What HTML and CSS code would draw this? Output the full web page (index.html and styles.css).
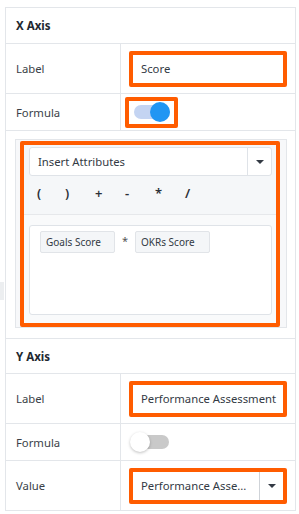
FILE: index.html
```html
<!DOCTYPE html>
<html lang="en">
  <head>
    <meta charset="UTF-8" />
    <meta name="viewport" content="width=device-width, initial-scale=1.0" />
    <title>Chart Axis Settings</title>
    <link rel="stylesheet" href="styles.css">
  </head>
  <body>
    <div class="edge-tab"></div>
    <div class="panel">
      <div class="section-title">X Axis</div>

      <div class="row row-tall">
        <div class="row-label">Label</div>
        <div class="row-value">
          <div class="hl hl-input">
            <input class="text-input" type="text" value="Score" />
          </div>
        </div>
      </div>

      <div class="row row-short">
        <div class="row-label">Formula</div>
        <div class="row-value">
          <div class="hl hl-toggle">
            <div class="toggle on"><span class="knob"></span></div>
          </div>
        </div>
      </div>

      <div class="formula-area">
        <div class="formula-box">
          <div class="hl hl-editor">
            <div class="editor-top">
              <div class="select">
                <span class="select-text">Insert Attributes</span>
                <span class="select-caret"><span class="caret"></span></span>
              </div>
              <div class="operators">
                <span class="op">(</span>
                <span class="op">)</span>
                <span class="op">+</span>
                <span class="op">-</span>
                <span class="op">*</span>
                <span class="op">/</span>
              </div>
            </div>
            <div class="editor-bottom">
              <div class="expression">
                <span class="chip">Goals Score</span>
                <span class="chip-op">*</span>
                <span class="chip">OKRs Score</span>
              </div>
            </div>
          </div>
        </div>
      </div>

      <div class="section-title with-border">Y Axis</div>

      <div class="row row-tall">
        <div class="row-label">Label</div>
        <div class="row-value">
          <div class="hl hl-input">
            <input class="text-input" type="text" value="Performance Assessment" />
          </div>
        </div>
      </div>

      <div class="row row-short">
        <div class="row-label">Formula</div>
        <div class="row-value">
          <div class="toggle off"><span class="knob"></span></div>
        </div>
      </div>

      <div class="row row-tall">
        <div class="row-label">Value</div>
        <div class="row-value">
          <div class="hl hl-input">
            <div class="select select-plain">
              <span class="select-text">Performance Asse...</span>
              <span class="select-caret"><span class="caret"></span></span>
            </div>
          </div>
        </div>
      </div>
    </div>
  </body>
</html>
```

FILE: styles.css
```css
* {
  margin: 0;
  padding: 0;
  box-sizing: border-box;
}

body {
  font-family: 'Noto Sans', 'Open Sans', Arial, sans-serif;
  font-size: 11.3px;
  color: #333a44;
  background: #ffffff;
  padding: 7px 3px 0 5px;
}

.edge-tab {
  position: absolute;
  left: 0;
  top: 282px;
  width: 4px;
  height: 18px;
  background: #eceef0;
}

.panel {
  width: 291px;
  border: 1px solid #e3e6ea;
}

.section-title {
  height: 35px;
  display: flex;
  align-items: center;
  padding-left: 10px;
  font-weight: bold;
  font-size: 11.5px;
  color: #222831;
}

.section-title.with-border {
  border-top: 1px solid #e3e6ea;
}

.row {
  display: grid;
  grid-template-columns: 115px 1fr;
  border-top: 1px solid #e3e6ea;
}

.row-tall {
  height: 50px;
}

.row-short {
  height: 37px;
}

.row-label {
  display: flex;
  align-items: center;
  padding-left: 10px;
  border-right: 1px solid #e3e6ea;
  color: #3a3f47;
}

.row-value {
  display: flex;
  align-items: center;
  padding-left: 8px;
}

.hl {
  border: 4px solid #ff5c00;
  border-radius: 2px;
}

.hl-input {
  width: 158px;
  height: 36px;
  display: flex;
}

.text-input {
  flex: 1;
  min-width: 0;
  border: none;
  outline: none;
  background: #fff;
  font-family: inherit;
  font-size: 11.3px;
  color: #333a44;
  padding-left: 8px;
}

.hl-toggle {
  width: 53px;
  height: 31px;
  margin-left: -4px;
  display: flex;
  align-items: center;
  padding-left: 5px;
}

.toggle {
  position: relative;
  width: 36px;
  height: 14px;
  border-radius: 7px;
}

.toggle .knob {
  position: absolute;
  top: -3px;
  width: 20px;
  height: 20px;
  border-radius: 50%;
}

.toggle.on {
  background: #c4d4f2;
}

.toggle.on .knob {
  right: 0;
  background: #2196f3;
}

.toggle.off {
  background: #c9c9c9;
  margin-left: 6px;
  width: 34px;
}

.toggle.off .knob {
  left: -5px;
  background: #ffffff;
  box-shadow: 0 1px 3px rgba(0, 0, 0, 0.25);
}

.formula-area {
  border-top: 1px solid #e3e6ea;
  padding: 8px 8px 10px 9px;
}

.formula-box {
  border: 1px solid #e3e6ea;
  background: #f7f8fa;
  padding: 1px 6px 0 4px;
}

.hl-editor {
  height: 186px;
  display: flex;
  flex-direction: column;
}

.editor-top {
  background: #f5f7f9;
  padding: 2px 4px 0 5px;
  height: 70px;
  border-bottom: 1px solid #e6e8eb;
}

.select {
  height: 29px;
  display: flex;
  background: #ffffff;
  border: 1px solid #dfe3e8;
  border-radius: 3px;
}

.select-text {
  flex: 1;
  display: flex;
  align-items: center;
  padding-left: 8px;
  color: #333a44;
  white-space: nowrap;
  overflow: hidden;
}

.select-caret {
  width: 24px;
  border-left: 1px solid #dfe3e8;
  display: flex;
  align-items: center;
  justify-content: center;
}

.caret {
  width: 0;
  height: 0;
  border-left: 4px solid transparent;
  border-right: 4px solid transparent;
  border-top: 4px solid #333a44;
}

.select-plain {
  flex: 1;
  border: none;
  border-radius: 0;
  height: auto;
}

.select-plain .select-caret {
  width: 24px;
  border-left-color: #cfd3d8;
}

.operators {
  display: flex;
  height: 34px;
  align-items: center;
  padding-left: 8px;
}

.op {
  width: 30px;
  font-size: 13px;
  font-weight: 600;
  color: #2c3038;
}

.op:first-child {
  width: 28px;
}

.editor-bottom {
  flex: 1;
  background: #f9fafb;
  padding: 10px 4px 4px 5px;
}

.expression {
  height: 90px;
  background: #ffffff;
  border: 1px solid #dfe3e8;
  border-radius: 3px;
  padding: 5px 10px;
  display: flex;
  align-items: flex-start;
}

.chip {
  height: 22px;
  width: 75px;
  display: flex;
  align-items: center;
  padding-left: 5px;
  font-size: 10px;
  color: #333a44;
  background: #f4f6f8;
  border: 1px solid #e1e4e8;
  border-radius: 2px;
}

.chip-op {
  width: 20px;
  text-align: center;
  font-size: 11px;
  padding-top: 2px;
  color: #555;
}
```
